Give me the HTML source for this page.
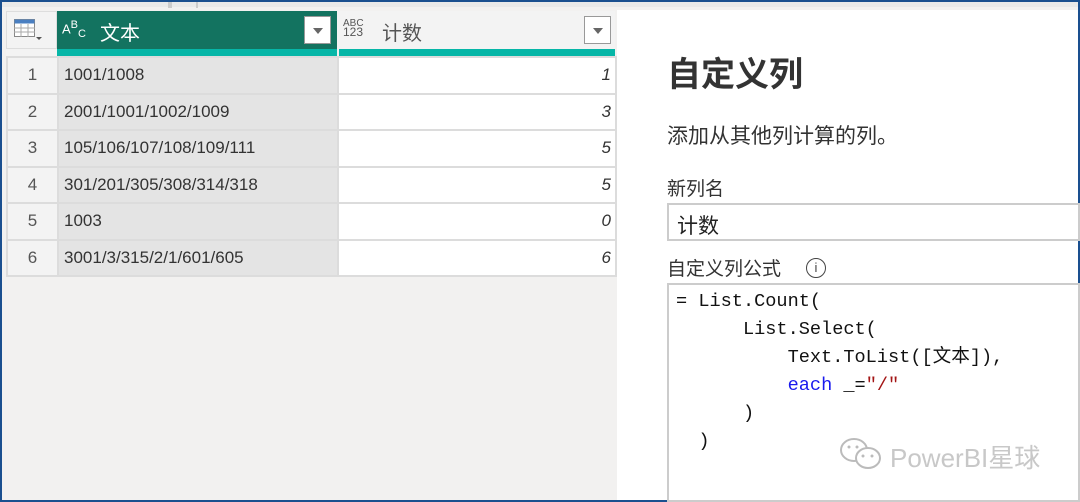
<!DOCTYPE html>
<html><head><meta charset="utf-8"><style>
*{margin:0;padding:0;box-sizing:border-box}
body{width:1080px;height:502px;overflow:hidden;background:#1a4f8f;font-family:"Liberation Sans","Noto Sans CJK SC",sans-serif;position:relative}
.frame{position:absolute;left:2px;top:2px;right:2px;bottom:2px;background:#f2f1f0}
.abs{position:absolute}
.topstrip{left:2px;top:2px;width:1076px;height:5px;background:#e9e9e9}
table{border-collapse:collapse;position:absolute;left:6px;top:11px}
td{border:2px solid #dcdcdc;height:36.5px;font-size:17px;color:#333}
.idx{width:51px;background:#f3f3f3;text-align:center;color:#555}
.txt{width:280px;background:#e4e4e4;padding-left:5px}
.num{width:278px;background:#fff;text-align:right;padding-right:4px;font-style:italic}
.right{left:617px;top:10px;width:461px;height:490px;background:#fff}
.code{font-family:"Liberation Mono","Noto Sans CJK SC",monospace;font-size:18.6px;line-height:28px;color:#111;white-space:pre}
</style></head><body>
<div class="frame"></div>
<div class="abs topstrip"></div>
<div class="abs" style="left:168px;top:2px;width:4px;height:6px;background:#ccc"></div>
<div class="abs" style="left:196px;top:2px;width:2px;height:6px;background:#ccc"></div>
<div class="abs" style="left:6px;top:11px;width:51px;height:38px;background:#f3f3f3;border:1px solid #ddd"></div>
<svg class="abs" style="left:14px;top:19px" width="40" height="24"><rect x="0.5" y="0.5" width="20" height="17" fill="#fff" stroke="#888"/><rect x="0.5" y="0.5" width="20" height="4" fill="#4a7fc1"/><path d="M0 9h21M0 13h21M7 5v13M14 5v13" stroke="#aaa"/><path d="M22 18l3 3 3-3z" fill="#555"/></svg>
<div class="abs" style="left:57px;top:11px;width:280px;height:38px;background:#137360"></div>
<div class="abs" style="left:62px;top:19px;color:#fff;font-size:13px">A<sup style="font-size:11px">B</sup><sub style="font-size:11px">C</sub></div>
<div class="abs" style="left:100px;top:17px;color:#fff;font-size:20px">文本</div>
<div class="abs" style="left:304px;top:16px;width:27px;height:28px;background:#fff;border:1px solid #999"></div>
<svg class="abs" style="left:312px;top:27px" width="12" height="8"><path d="M1 1h10l-5 6z" fill="#666"/></svg>
<div class="abs" style="left:337px;top:11px;width:278px;height:38px;background:#f3f3f3"></div>
<div class="abs" style="left:343px;top:19px;font-size:10px;line-height:9px;color:#555">ABC<br><span style="font-size:12px">123</span></div>
<div class="abs" style="left:382px;top:17px;color:#555;font-size:20px">计数</div>
<div class="abs" style="left:584px;top:16px;width:27px;height:28px;background:#fff;border:1px solid #999"></div>
<svg class="abs" style="left:592px;top:27px" width="12" height="8"><path d="M1 1h10l-5 6z" fill="#666"/></svg>
<div class="abs" style="left:6px;top:49px;width:51px;height:8px;background:#f3f3f3"></div>
<div class="abs" style="left:57px;top:49px;width:280px;height:7px;background:#06b6a7"></div>
<div class="abs" style="left:339px;top:49px;width:276px;height:7px;background:#06b6a7"></div>
<table style="top:56px">
<tr><td class="idx">1</td><td class="txt">1001/1008</td><td class="num">1</td></tr>
<tr><td class="idx">2</td><td class="txt">2001/1001/1002/1009</td><td class="num">3</td></tr>
<tr><td class="idx">3</td><td class="txt">105/106/107/108/109/111</td><td class="num">5</td></tr>
<tr><td class="idx">4</td><td class="txt">301/201/305/308/314/318</td><td class="num">5</td></tr>
<tr><td class="idx">5</td><td class="txt">1003</td><td class="num">0</td></tr>
<tr><td class="idx">6</td><td class="txt">3001/3/315/2/1/601/605</td><td class="num">6</td></tr>
</table>
<div class="abs right"></div>
<div class="abs" style="left:667px;top:47px;font-size:34px;font-weight:bold;color:#333">自定义列</div>
<div class="abs" style="left:667px;top:120px;font-size:21px;color:#333">添加从其他列计算的列。</div>
<div class="abs" style="left:667px;top:174px;font-size:19px;color:#333">新列名</div>
<div class="abs" style="left:667px;top:203px;width:413px;height:38px;border:2px solid #ccc;background:#fff"></div>
<div class="abs" style="left:677px;top:210px;font-size:21px;color:#222">计数</div>
<div class="abs" style="left:667px;top:254px;font-size:19px;color:#333">自定义列公式</div>
<div class="abs" style="left:806px;top:258px;width:20px;height:20px;border:1.5px solid #444;border-radius:50%;font-size:13px;text-align:center;line-height:17px;color:#444">i</div>
<div class="abs" style="left:667px;top:283px;width:413px;height:219px;border:2px solid #ccc;background:#fff"></div>
<div class="abs code" style="left:676px;top:288px">= List.Count(
      List.Select(
          Text.ToList([文本]),
          <span style="color:#1a1aee">each</span> _=<span style="color:#a31515">"/"</span>
      )
  )</div>
<svg class="abs" style="left:838px;top:436px" width="48" height="36"><ellipse cx="16" cy="14" rx="13" ry="11" fill="none" stroke="#bbb" stroke-width="2"/><ellipse cx="30" cy="22" rx="12" ry="10" fill="#fff" stroke="#bbb" stroke-width="2"/><circle cx="25" cy="20" r="1.5" fill="#bbb"/><circle cx="34" cy="20" r="1.5" fill="#bbb"/><circle cx="11" cy="11" r="1.5" fill="#bbb"/><circle cx="19" cy="11" r="1.5" fill="#bbb"/></svg>
<div class="abs" style="left:890px;top:438px;font-size:26px;color:#c8c8c8">PowerBI星球</div>
</body></html>
